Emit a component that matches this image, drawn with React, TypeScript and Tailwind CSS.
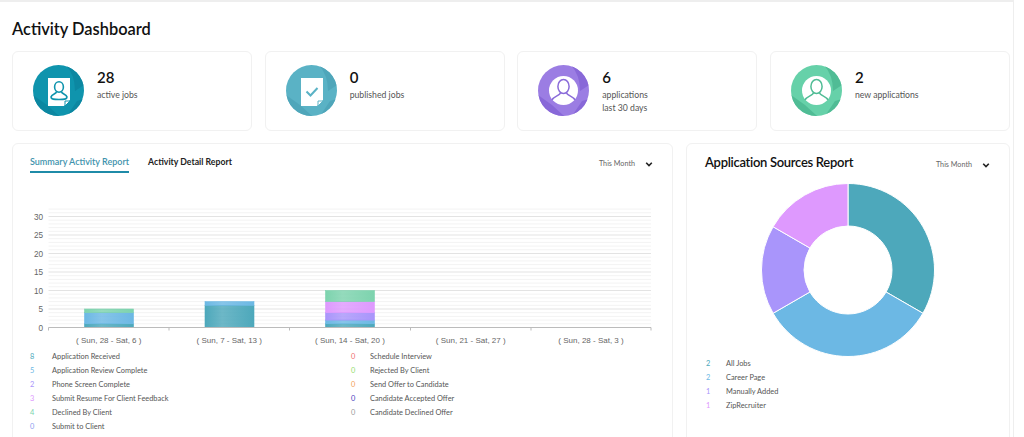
import React from "react";

const TEAL = "#4da8bb";
const BLUE = "#6cb8e4";
const VIOLET = "#a995fb";
const PINK = "#de99fe";
const GREEN = "#7dd3ae";

// chart geometry, in px relative to the chart svg
const AXIS_Y = 147.5;
const UNIT = 3.7;
const LEFT = 35.5;
const RIGHT = 638;
const TICKS = [35.5, 156, 276.5, 397.5, 518, 638];

const weeks = ["( Sun, 28 - Sat, 6 )", "( Sun, 7 - Sat, 13 )", "( Sun, 14 - Sat, 20 )", "( Sun, 21 - Sat, 27 )", "( Sun, 28 - Sat, 3 )"];

const bars = [
  { x: 71.5, parts: [["teal", 1], ["blue", 3], ["green", 1]] },
  { x: 192, parts: [["teal", 6], ["blue", 1]] },
  { x: 312.5, parts: [["teal", 1], ["blue", 1], ["violet", 2], ["pink", 3], ["green", 3]] },
] as { x: number; parts: [string, number][] }[];

const activityLeft = [
  { n: "8", c: "text-[#4da8bb]", label: "Application Received" },
  { n: "5", c: "text-[#6cb8e4]", label: "Application Review Complete" },
  { n: "2", c: "text-[#a995fb]", label: "Phone Screen Complete" },
  { n: "3", c: "text-[#de99fe]", label: "Submit Resume For Client Feedback" },
  { n: "4", c: "text-[#7dd3ae]", label: "Declined By Client" },
  { n: "0", c: "text-[#8b9cf0]", label: "Submit to Client" },
];

const activityRight = [
  { n: "0", c: "text-[#ef6f6f]", label: "Schedule Interview" },
  { n: "0", c: "text-[#93de6d]", label: "Rejected By Client" },
  { n: "0", c: "text-[#f3a257]", label: "Send Offer to Candidate" },
  { n: "0", c: "text-[#4a3fc0]", label: "Candidate Accepted Offer" },
  { n: "0", c: "text-[#9a9a9a]", label: "Candidate Declined Offer" },
];

const sources = [
  { n: "2", c: "text-[#4da8bb]", label: "All Jobs" },
  { n: "2", c: "text-[#6cb8e4]", label: "Career Page" },
  { n: "1", c: "text-[#a995fb]", label: "Manually Added" },
  { n: "1", c: "text-[#de99fe]", label: "ZipRecruiter" },
];

function Facets({ dark, id }: { dark: string; id: string }) {
  return (
    <>
      <clipPath id={id}>
        <circle cx="25.5" cy="25.5" r="25.5" />
      </clipPath>
      <g clipPath={`url(#${id})`} fill={dark}>
        <path d="M33 0 L51 0 L51 20 L42 26 Q42 10 33 0Z" />
        <path d="M0 30 L14 40 L26 51 L0 51Z" />
        <path d="M34 51 L44 36 L51 34 L51 51Z" />
      </g>
    </>
  );
}

function DocIcon({ bg, dark, id, check }: { bg: string; dark: string; id: string; check?: boolean }) {
  return (
    <svg viewBox="0 0 51 51" className="w-[51px] h-[51px] shrink-0">
      <circle cx="25.5" cy="25.5" r="25.5" fill={bg} />
      <Facets dark={dark} id={id} />
      <path d="M15 13 H37 V35 L31 41 H15Z" fill="#fff" />
      <path d="M32 41 V36 H37Z" fill="#fff" stroke={bg} strokeWidth="1" />
      {check ? (
        <path d="M20.5 26.5 L24.5 30.5 L31.5 23" fill="none" stroke={bg} strokeWidth="2" />
      ) : (
        <g fill="none" stroke={bg} strokeWidth="1.6">
          <ellipse cx="26" cy="22" rx="4.4" ry="5.2" />
          <path d="M23.5 27 C23 29 18.5 29 18 32 C18 34.5 21 34.5 26 34.5 C31 34.5 34 34.5 34 32 C33.5 29 29 29 28.5 27" />
        </g>
      )}
    </svg>
  );
}

function PersonIcon({ bg, dark, stroke, id }: { bg: string; dark: string; stroke: string; id: string }) {
  return (
    <svg viewBox="0 0 51 51" className="w-[51px] h-[51px] shrink-0">
      <circle cx="25.5" cy="25.5" r="25.5" fill={bg} />
      <Facets dark={dark} id={id} />
      <circle cx="25.5" cy="25.5" r="14.5" fill="#fff" />
      <g fill="none" stroke={stroke} strokeWidth="1.5">
        <ellipse cx="25.5" cy="21.5" rx="5.6" ry="7" />
        <path d="M22.5 27.5 C22.5 30.5 15.5 31 14 35 M28.5 27.5 C28.5 30.5 35.5 31 37 35" />
      </g>
    </svg>
  );
}

function StatCard({ icon, value, lines }: { icon: React.ReactNode; value: string; lines: string[] }) {
  return (
    <div className="h-[80px] flex items-start rounded-md border border-[#f1f1f1] pl-[20px] pt-[13px]">
      {icon}
      <div className="ml-[13px] pt-[2px]">
        <div className="text-[15px] leading-[20.5px] font-semibold text-[#111]">{value}</div>
        {lines.map((l) => (
          <div key={l} className="text-[8.7px] leading-[13.5px] text-[#555]">{l}</div>
        ))}
      </div>
    </div>
  );
}

function Legend({ items, gap }: { items: { n: string; c: string; label: string }[]; gap: string }) {
  return (
    <div className="flex flex-col">
      {items.map((it) => (
        <div key={it.label} className="flex h-[14px] items-center text-[7.4px] text-[#555]">
          <span className={`${gap} ${it.c}`}>{it.n}</span>
          <span>{it.label}</span>
        </div>
      ))}
    </div>
  );
}

function MonthSelect() {
  return (
    <div className="flex items-center text-[7.2px] text-[#666]">
      <span>This Month</span>
      <svg viewBox="0 0 10 10" className="w-[8px] h-[8px] ml-[10px]">
        <path d="M1.5 3.5 L5 7 L8.5 3.5" fill="none" stroke="#222" strokeWidth="2" />
      </svg>
    </div>
  );
}

function BarChart() {
  const fills: Record<string, string> = { teal: TEAL, blue: BLUE, violet: VIOLET, pink: PINK, green: GREEN };
  const gridLines = [];
  for (let i = 1; i <= 32; i++) {
    const y = AXIS_Y - i * UNIT;
    gridLines.push(<line key={i} x1={LEFT} x2={RIGHT} y1={y} y2={y} stroke={i % 5 === 0 ? "#e3e3e3" : "#f3f3f3"} strokeWidth="1" />);
  }
  return (
    <svg width="659" height="170" className="block">
      <defs>
        {Object.entries(fills).map(([k, v]) => (
          <linearGradient key={k} id={`bar-${k}`} x1="0" x2="1" y1="0" y2="0">
            <stop offset="0" stopColor={v} />
            <stop offset="0.35" stopColor={v} stopOpacity="0.82" />
            <stop offset="1" stopColor={v} />
          </linearGradient>
        ))}
      </defs>
      {gridLines}
      {[0, 5, 10, 15, 20, 25, 30].map((v) => (
        <text key={v} x="30" y={AXIS_Y - v * UNIT + 3} textAnchor="end" fontSize="8.2" fill="#666" fontFamily="'Liberation Sans', Arial, sans-serif">{v}</text>
      ))}
      {bars.map((b) => {
        let acc = 0;
        return (
          <g key={b.x}>
            {b.parts.map(([k, n]) => {
              const y = AXIS_Y - (acc + n) * UNIT;
              acc += n;
              return <rect key={k} x={b.x} y={y} width="49" height={n * UNIT} fill={`url(#bar-${k})`} stroke={fills[k]} strokeWidth="0.6" />;
            })}
          </g>
        );
      })}
      <line x1={LEFT} x2={RIGHT} y1={AXIS_Y} y2={AXIS_Y} stroke="#bbb" />
      {TICKS.map((t) => (
        <line key={t} x1={t} x2={t} y1={AXIS_Y} y2={AXIS_Y + 3} stroke="#bbb" />
      ))}
      {weeks.map((w, i) => (
        <text key={w} x={(TICKS[i] + TICKS[i + 1]) / 2} y={AXIS_Y + 15.5} textAnchor="middle" fontSize="8" fill="#666" fontFamily="'Liberation Sans', Arial, sans-serif">{w}</text>
      ))}
    </svg>
  );
}

function polar(r: number, deg: number) {
  const a = ((deg - 90) * Math.PI) / 180;
  return `${87 + r * Math.cos(a)} ${87 + r * Math.sin(a)}`;
}

function Donut() {
  const slices = [
    { from: 0, to: 120, fill: TEAL },
    { from: 120, to: 240, fill: BLUE },
    { from: 240, to: 300, fill: VIOLET },
    { from: 300, to: 360, fill: PINK },
  ];
  return (
    <svg width="174" height="174" className="block mx-auto">
      {slices.map((s) => (
        <path
          key={s.from}
          d={`M${polar(86.5, s.from)} A86.5 86.5 0 0 1 ${polar(86.5, s.to)} L${polar(44, s.to)} A44 44 0 0 0 ${polar(44, s.from)}Z`}
          fill={s.fill}
          stroke="#fff"
          strokeWidth="1"
        />
      ))}
    </svg>
  );
}

export default function App() {
  return (
    <div className="w-[1014px] h-[437px] overflow-hidden bg-white border-t-2 border-r border-[#eeeeee] pl-3 pr-[3px] font-['Lato',sans-serif]">
      <h1 className="h-[49px] pt-[14px] text-[16.4px] leading-[26px] font-semibold text-[#111]">Activity Dashboard</h1>

      <div className="grid grid-cols-4 gap-[12.5px] mb-[12px]">
        <StatCard icon={<DocIcon bg="#0f94ad" dark="#0c87a1" id="f1" />} value="28" lines={["active jobs"]} />
        <StatCard icon={<DocIcon bg="#5ab2c5" dark="#4fa6ba" id="f2" check />} value="0" lines={["published jobs"]} />
        <StatCard icon={<PersonIcon bg="#9b7de3" dark="#8868d8" stroke="#8a6bd9" id="f3" />} value="6" lines={["applications", "last 30 days"]} />
        <StatCard icon={<PersonIcon bg="#66d1a9" dark="#50bc95" stroke="#50bc95" id="f4" />} value="2" lines={["new applications"]} />
      </div>

      <div className="grid grid-cols-[661px_324px] gap-[13px]">
        <div className="h-[320px] rounded-md border border-[#f1f1f1]">
          <div className="flex items-start justify-between pl-[17px] pr-[19px] pt-[9px] h-[36px]">
            <div className="flex text-[9px] font-semibold">
              <div className="h-[20px] leading-[18px] border-b-2 border-[#1f8ba8] text-[#3f93ad]">Summary Activity Report</div>
              <div className="ml-[19px] leading-[18px] text-[8.7px] font-bold text-[#222]">Activity Detail Report</div>
            </div>
            <div className="pt-[6px]"><MonthSelect /></div>
          </div>
          <BarChart />
          <div className="flex pl-[17px]">
            <div className="w-[321px]"><Legend items={activityLeft} gap="w-[22px]" /></div>
            <Legend items={activityRight} gap="w-[19px]" />
          </div>
        </div>

        <div className="h-[320px] rounded-md border border-[#f1f1f1]">
          <div className="flex items-center justify-between pl-[18px] pr-[19px] pt-[6px] h-[28px]">
            <h2 className="pt-[4px] text-[13px] tracking-[-0.3px] font-semibold text-[#111]">Application Sources Report</h2>
            <div className="pt-[8px]"><MonthSelect /></div>
          </div>
          <div className="mt-[11px]"><Donut /></div>
          <div className="pl-[19px]"><Legend items={sources} gap="w-[20px]" /></div>
        </div>
      </div>
    </div>
  );
}
